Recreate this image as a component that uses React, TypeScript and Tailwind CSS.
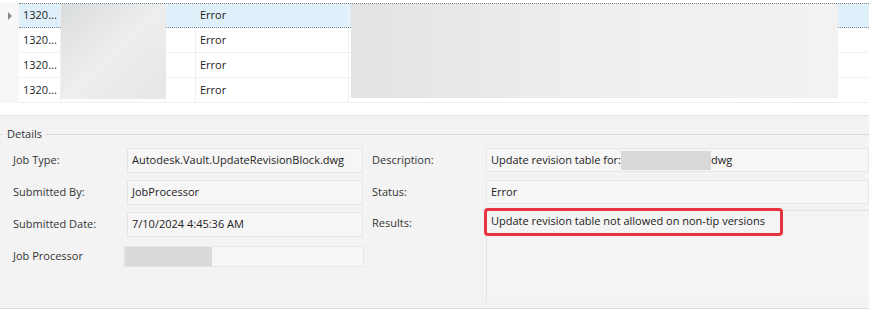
import { useState } from 'react';

interface JobRow {
  id: string;
  status: string;
}

const rows: JobRow[] = [
  { id: '1320...', status: 'Error' },
  { id: '1320...', status: 'Error' },
  { id: '1320...', status: 'Error' },
  { id: '1320...', status: 'Error' },
];

function Field({ label, children }: { label: string; children: React.ReactNode }) {
  return (
    <div className="flex items-center h-[32px]">
      <span className="w-[114px] shrink-0 text-[#333]">{label}</span>
      {children}
    </div>
  );
}

export default function App() {
  const [selected] = useState(0);

  return (
    <div
      className="w-[869px] h-[309px] bg-white text-[11px] text-[#222] overflow-hidden"
      style={{ fontFamily: '"Open Sans", "Noto Sans", sans-serif' }}
    >
      {/* job grid */}
      <div className="relative h-[116px] border-b border-[#e3e3e3]">
        <div className="pt-[3px]">
          {rows.map((row, i) => (
            <div
              key={i}
              className={`flex h-[25px] ${i === selected ? 'bg-[#dff0fa]' : ''}`}
            >
              <div className="w-[19px] shrink-0 bg-[#f7f7f7] flex items-center justify-center">
                {i === selected && (
                  <span className="w-0 h-0 border-y-[4px] border-y-transparent border-l-[4px] border-l-[#8a8a8a]" />
                )}
              </div>
              <div
                className={`flex-1 flex ${
                  i === selected
                    ? 'border-y border-dotted border-[#7d8a96]'
                    : 'border-b border-[#f0f0f0]'
                }`}
              >
                <div className="w-[42px] pl-[4px] flex items-center border-r border-[#f0f0f0]">{row.id}</div>
                <div className="w-[135px] border-r border-[#f0f0f0]" />
                <div className="w-[153px] pl-[4px] flex items-center border-r border-[#f0f0f0]">{row.status}</div>
                <div className="flex-1" />
              </div>
            </div>
          ))}
        </div>
        {/* redacted cells */}
        <div className="absolute left-[61px] top-[4px] w-[105px] h-[95px] bg-gradient-to-br from-[#d9dcdd] via-[#eeeeee] to-[#e6e6e6]" />
        <div className="absolute left-[351px] top-[4px] w-[487px] h-[94px] bg-gradient-to-r from-[#e3e3e3] via-[#efefef] to-[#f2f2f2]" />
      </div>

      {/* details panel */}
      <div className="h-[193px] bg-[#f3f3f3] border-b border-[#dcdcdc] pt-[10px]">
        <div className="flex items-center h-[16px]">
          <div className="w-[3px] h-px bg-[#d8d8d8]" />
          <span className="px-[4px] text-[#333]">Details</span>
          <div className="flex-1 h-px bg-[#d8d8d8]" />
        </div>
        <div className="flex mt-[2px]">
          <div className="w-[372px] pl-[13px] shrink-0">
            <Field label="Job Type:">
              <div className="w-[236px] h-[25px] pl-[4px] flex items-center bg-[#f6f6f6] border border-[#e6e6e6]">
                Autodesk.Vault.UpdateRevisionBlock.dwg
              </div>
            </Field>
            <Field label="Submitted By:">
              <div className="w-[236px] h-[25px] pl-[4px] flex items-center bg-[#f6f6f6] border border-[#e6e6e6]">
                JobProcessor
              </div>
            </Field>
            <Field label="Submitted Date:">
              <div className="w-[236px] h-[25px] pl-[4px] flex items-center bg-[#f6f6f6] border border-[#e6e6e6]">
                7/10/2024 4:45:36 AM
              </div>
            </Field>
            <Field label="Job Processor">
              <div className="w-[240px] h-[21px] flex items-center bg-[#f6f6f6] border border-[#e6e6e6] -ml-[3px]">
                <div className="w-[87px] h-[19px] bg-[#dadada]" />
              </div>
            </Field>
          </div>
          <div className="flex-1">
            <Field label="Description:">
              <div className="flex-1 h-[24px] pl-[4px] flex items-center bg-[#f6f6f6] border border-[#e6e6e6]">
                Update revision table for:
                <span className="inline-block w-[90px] h-[19px] bg-[#d9d9d9]" />
                dwg
              </div>
            </Field>
            <Field label="Status:">
              <div className="flex-1 h-[24px] pl-[4px] flex items-center bg-[#f6f6f6] border border-[#e6e6e6]">
                Error
              </div>
            </Field>
            <div className="flex mt-[2px]">
              <span className="w-[114px] shrink-0 pt-[5px] text-[#333]">Results:</span>
              <div className="relative flex-1 h-[92px] border-l border-t border-[#e3e3e3] bg-[#f4f4f4] pl-[4px] pt-[2px]">
                Update revision table not allowed on non-tip versions
                <div className="absolute -left-[3px] -top-[3px] w-[299px] h-[28px] border-[3px] border-[#e63540] rounded-[4px]" />
              </div>
            </div>
          </div>
        </div>
      </div>
    </div>
  );
}
